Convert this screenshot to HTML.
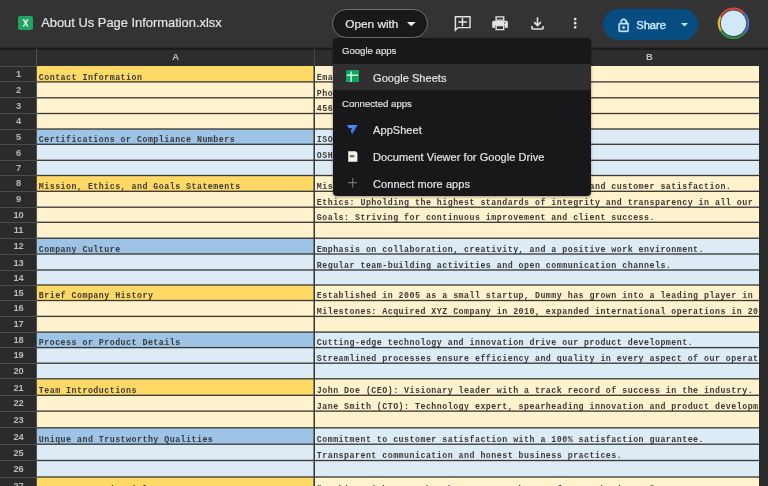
<!DOCTYPE html>
<html><head><meta charset="utf-8">
<style>
html,body{margin:0;padding:0;width:768px;height:486px;overflow:hidden;background:#2b2b2b;font-family:"Liberation Sans",sans-serif;}
svg{position:absolute;display:block;}
#top{position:absolute;left:0;top:0;width:768px;height:48px;background:#333333;}
#topline{position:absolute;left:0;top:48px;width:768px;height:2px;background:#1c1c1c;}
#topline2{position:absolute;left:0;top:47px;width:768px;height:1px;background:#282828;}
.rn{position:absolute;padding-top:0.9px;left:0.6px;width:36px;text-align:center;color:#b9b9b9;font-size:9.3px;font-weight:bold;}
.rnb{position:absolute;left:0;width:36px;height:1px;background:#4d4d4d;}
.rb{position:absolute;left:36.5px;width:722px;background:#3c3c36;}
.c{position:absolute;overflow:hidden;}
.c span{position:absolute;left:2.3px;font-family:"Liberation Mono",monospace;font-size:8.3px;letter-spacing:0.475px;font-weight:bold;color:#3a3a3a;white-space:nowrap;line-height:11px;}
.ca{left:36.5px;width:277px;}
.cb{left:314.5px;width:444px;}
#colhdr{position:absolute;left:0;top:49px;width:768px;height:17.2px;background:#2d2d2d;}
.ch{position:absolute;top:47.9px;height:17px;line-height:17px;text-align:center;color:#bdbdbd;font-size:9.4px;font-weight:bold;}
#menu{position:absolute;left:332.8px;top:38px;width:258px;height:157.5px;background:#18181a;border-radius:4px;box-shadow:0 1px 3px rgba(0,0,0,.4);}
.ml{position:absolute;color:#e3e3e3;font-size:11px;white-space:nowrap;letter-spacing:0.05px;-webkit-text-stroke:0.2px #e3e3e3;}
.mh{position:absolute;color:#e3e3e3;font-size:9.6px;white-space:nowrap;-webkit-text-stroke:0.15px #e3e3e3;}
</style></head><body><div id="root" style="position:absolute;left:0;top:0;width:768px;height:486px;will-change:transform;">
<div id="top">
  <svg style="left:18px;top:16px" width="15" height="14" viewBox="0 0 15 14"><rect x="0" y="0" width="15" height="14" rx="2" fill="#1fa463"/><path d="M4.6 3.3h1.7l1.3 2.2 1.3-2.2h1.6L8.5 6.9l2.1 3.6H8.9L7.6 8.2 6.2 10.5H4.6l2.2-3.6z" fill="#e8f5ec"/></svg>
  <div style="position:absolute;left:41.2px;top:15.2px;color:#e3e3e3;font-size:12.9px;white-space:nowrap;-webkit-text-stroke:0.2px #e3e3e3;">About Us Page Information.xlsx</div>
  <div style="position:absolute;left:332px;top:8.5px;width:96px;height:29.2px;box-sizing:border-box;border:1px solid #707070;border-radius:15px;background:#19191b;"></div>
  <div style="position:absolute;left:345.3px;top:17.3px;color:#ececec;font-size:11.8px;white-space:nowrap;letter-spacing:0px;-webkit-text-stroke:0.2px #ececec;">Open with</div>
  <svg style="left:407px;top:21.8px" width="9" height="5"><path d="M0 0h8.6L4.3 4.2z" fill="#eee"/></svg>
  <!-- add comment -->
  <svg style="left:448px;top:10px" width="30" height="26" viewBox="0 0 30 26"><path d="M7.4 6.7H22V17.6H9.9L7.4 20.2Z" fill="none" stroke="#e3e3e3" stroke-width="1.45"/><path d="M10.3 11.3H19V12.8H10.3zM13.7 7.9H15.2V16.2H13.7z" fill="#e3e3e3"/></svg>
  <!-- print -->
  <svg style="left:486px;top:10px" width="30" height="26" viewBox="0 0 30 26"><path fill="#e3e3e3" fill-rule="evenodd" d="M9.4 6.2h9v4.6h-9zM10.8 7.6v1.9h6.2V7.6z"/><path fill="#e3e3e3" d="M6.2 12.3q0-1.6 1.6-1.6h12.5q1.6 0 1.6 1.6V17.7H6.2z"/><path fill="#333" d="M9 15h9.8v5.6H9z"/><path fill="#e3e3e3" fill-rule="evenodd" d="M9.4 14.9h9v5.4h-9zM10.8 16.3v2.6h6.2v-2.6z"/><circle cx="18.9" cy="12.9" r="0.75" fill="#444"/></svg>
  <!-- download -->
  <svg style="left:528px;top:13.75px" width="19" height="19" viewBox="0 -960 960 960"><path fill="#e3e3e3" d="M480-320 280-520l56-58 104 104v-326h80v326l104-104 56 58-200 200ZM240-160q-33 0-56.5-23.5T160-240v-120h80v120h480v-120h80v120q0 33-23.5 56.5T720-160H240Z"/></svg>
  <!-- more -->
  <svg style="left:566.6px;top:15.2px" width="16.4" height="16.4" viewBox="0 0 24 24"><path fill="#e3e3e3" d="M12 8c1.1 0 2-.9 2-2s-.9-2-2-2-2 .9-2 2 .9 2 2 2zm0 2c-1.1 0-2 .9-2 2s.9 2 2 2 2-.9 2-2-.9-2-2-2zm0 6c-1.1 0-2 .9-2 2s.9 2 2 2 2-.9 2-2-.9-2-2-2z"/></svg>
  <!-- share -->
  <div style="position:absolute;left:603px;top:8.6px;width:95.2px;height:31.5px;border-radius:16px;background:#084d82;"></div>
  <div style="position:absolute;left:672.3px;top:8.6px;width:1px;height:31.5px;background:#0b4a7c;"></div>
  <svg style="left:615.5px;top:17.6px" width="15.2" height="15.2" viewBox="0 -960 960 960"><path fill="#c2e7ff" stroke="#c2e7ff" stroke-width="25" d="M240-80q-33 0-56.5-23.5T160-160v-400q0-33 23.5-56.5T240-640h40v-80q0-83 58.5-141.5T480-920q83 0 141.5 58.5T720-720v80h40q33 0 56.5 23.5T800-560v400q0 33-23.5 56.5T720-80H240Zm0-80h480v-400H240v400Zm240-120q33 0 56.5-23.5T560-360q0-33-23.5-56.5T480-440q-33 0-56.5 23.5T400-360q0 33 23.5 56.5T480-280ZM360-640h240v-80q0-50-35-85t-85-35q-50 0-85 35t-35 85v80Z"/></svg>
  <div style="position:absolute;left:636.2px;top:19.1px;color:#c2e7ff;font-size:11.2px;white-space:nowrap;-webkit-text-stroke:0.45px #c2e7ff;">Share</div>
  <svg style="left:681.2px;top:23px" width="8" height="4"><path d="M0 0h7L3.5 3.4z" fill="#c2e7ff"/></svg>
  <!-- avatar -->
  <svg style="left:716px;top:6px" width="36" height="36" viewBox="0 0 36 36">
    <g fill="none" stroke-width="2.3">
      <path d="M4.49 10.67A14.6 14.6 0 0 1 27.82 6.98" stroke="#d04a3c"/>
      <path d="M27.82 6.98A14.6 14.6 0 0 1 28.18 27.26" stroke="#4b72c6"/>
      <path d="M28.18 27.26A14.6 14.6 0 0 1 4.86 24.60" stroke="#2f8f4a"/>
      <path d="M4.86 24.60A14.6 14.6 0 0 1 4.49 10.67" stroke="#e3b42e"/>
    </g>
    <circle cx="17.5" cy="17.3" r="12.7" fill="#d0e8f8"/>
  </svg>
</div>
<div id="colhdr"></div>
<div id="topline"></div><div id="topline2"></div>
<div class="ch" style="left:37.2px;width:277px">A</div>
<div class="ch" style="left:549.4px;width:200px">B</div>
<div style="position:absolute;left:0;top:65.6px;width:36.5px;height:1px;background:#4d4d4d"></div>
<div class="rn" style="top:66.30px;height:15.60px;line-height:15.60px">1</div>
<div class="rnb" style="top:81.40px"></div>
<div class="c ca" style="top:66.30px;height:15.60px;background:#ffd966"><span style="top:5.49px">Contact Information</span></div>
<div class="c cb" style="top:66.30px;height:15.60px;background:#fff2cc"><span style="top:5.49px">Email: info@dummy.com</span></div>
<div class="rn" style="top:81.90px;height:15.90px;line-height:15.90px">2</div>
<div class="rnb" style="top:97.30px"></div>
<div class="c ca" style="top:81.90px;height:15.90px;background:#fff2cc"></div>
<div class="c cb" style="top:81.90px;height:15.90px;background:#fff2cc"><span style="top:5.79px">Phone: (123) 456-7890</span></div>
<div class="rn" style="top:97.80px;height:15.70px;line-height:15.70px">3</div>
<div class="rnb" style="top:113.00px"></div>
<div class="c ca" style="top:97.80px;height:15.70px;background:#fff2cc"></div>
<div class="c cb" style="top:97.80px;height:15.70px;background:#fff2cc"><span style="top:5.59px">456 Business Ave, Suite 100</span></div>
<div class="rn" style="top:113.50px;height:15.50px;line-height:15.50px">4</div>
<div class="rnb" style="top:128.50px"></div>
<div class="c ca" style="top:113.50px;height:15.50px;background:#fff2cc"></div>
<div class="c cb" style="top:113.50px;height:15.50px;background:#fff2cc"></div>
<div class="rn" style="top:129.00px;height:15.30px;line-height:15.30px">5</div>
<div class="rnb" style="top:143.80px"></div>
<div class="c ca" style="top:129.00px;height:15.30px;background:#9dc3e6"><span style="top:5.19px">Certifications or Compliance Numbers</span></div>
<div class="c cb" style="top:129.00px;height:15.30px;background:#ddebf7"><span style="top:5.19px">ISO 9001:2015 Certified</span></div>
<div class="rn" style="top:144.30px;height:16.00px;line-height:16.00px">6</div>
<div class="rnb" style="top:159.80px"></div>
<div class="c ca" style="top:144.30px;height:16.00px;background:#ddebf7"></div>
<div class="c cb" style="top:144.30px;height:16.00px;background:#ddebf7"><span style="top:5.89px">OSHA Compliance No. 12345</span></div>
<div class="rn" style="top:160.30px;height:15.20px;line-height:15.20px">7</div>
<div class="rnb" style="top:175.00px"></div>
<div class="c ca" style="top:160.30px;height:15.20px;background:#ddebf7"></div>
<div class="c cb" style="top:160.30px;height:15.20px;background:#ddebf7"></div>
<div class="rn" style="top:175.50px;height:15.80px;line-height:15.80px">8</div>
<div class="rnb" style="top:190.80px"></div>
<div class="c ca" style="top:175.50px;height:15.80px;background:#ffd966"><span style="top:5.69px">Mission, Ethics, and Goals Statements</span></div>
<div class="c cb" style="top:175.50px;height:15.80px;background:#fff2cc"><span style="top:5.69px">Mission: To deliver exceptional solutions, growth and customer satisfaction.</span></div>
<div class="rn" style="top:191.30px;height:15.90px;line-height:15.90px">9</div>
<div class="rnb" style="top:206.70px"></div>
<div class="c ca" style="top:191.30px;height:15.90px;background:#fff2cc"></div>
<div class="c cb" style="top:191.30px;height:15.90px;background:#fff2cc"><span style="top:5.79px">Ethics: Upholding the highest standards of integrity and transparency in all our dealings.</span></div>
<div class="rn" style="top:207.20px;height:15.10px;line-height:15.10px">10</div>
<div class="rnb" style="top:221.80px"></div>
<div class="c ca" style="top:207.20px;height:15.10px;background:#fff2cc"></div>
<div class="c cb" style="top:207.20px;height:15.10px;background:#fff2cc"><span style="top:4.99px">Goals: Striving for continuous improvement and client success.</span></div>
<div class="rn" style="top:222.30px;height:15.90px;line-height:15.90px">11</div>
<div class="rnb" style="top:237.70px"></div>
<div class="c ca" style="top:222.30px;height:15.90px;background:#fff2cc"></div>
<div class="c cb" style="top:222.30px;height:15.90px;background:#fff2cc"></div>
<div class="rn" style="top:238.20px;height:15.80px;line-height:15.80px">12</div>
<div class="rnb" style="top:253.50px"></div>
<div class="c ca" style="top:238.20px;height:15.80px;background:#9dc3e6"><span style="top:5.69px">Company Culture</span></div>
<div class="c cb" style="top:238.20px;height:15.80px;background:#ddebf7"><span style="top:5.69px">Emphasis on collaboration, creativity, and a positive work environment.</span></div>
<div class="rn" style="top:254.00px;height:16.00px;line-height:16.00px">13</div>
<div class="rnb" style="top:269.50px"></div>
<div class="c ca" style="top:254.00px;height:16.00px;background:#ddebf7"></div>
<div class="c cb" style="top:254.00px;height:16.00px;background:#ddebf7"><span style="top:5.89px">Regular team-building activities and open communication channels.</span></div>
<div class="rn" style="top:270.00px;height:15.00px;line-height:15.00px">14</div>
<div class="rnb" style="top:284.50px"></div>
<div class="c ca" style="top:270.00px;height:15.00px;background:#ddebf7"></div>
<div class="c cb" style="top:270.00px;height:15.00px;background:#ddebf7"></div>
<div class="rn" style="top:285.00px;height:15.50px;line-height:15.50px">15</div>
<div class="rnb" style="top:300.00px"></div>
<div class="c ca" style="top:285.00px;height:15.50px;background:#ffd966"><span style="top:5.39px">Brief Company History</span></div>
<div class="c cb" style="top:285.00px;height:15.50px;background:#fff2cc"><span style="top:5.39px">Established in 2005 as a small startup, Dummy has grown into a leading player in the industry.</span></div>
<div class="rn" style="top:300.50px;height:15.90px;line-height:15.90px">16</div>
<div class="rnb" style="top:315.90px"></div>
<div class="c ca" style="top:300.50px;height:15.90px;background:#fff2cc"></div>
<div class="c cb" style="top:300.50px;height:15.90px;background:#fff2cc"><span style="top:5.79px">Milestones: Acquired XYZ Company in 2010, expanded international operations in 2015.</span></div>
<div class="rn" style="top:316.40px;height:15.70px;line-height:15.70px">17</div>
<div class="rnb" style="top:331.60px"></div>
<div class="c ca" style="top:316.40px;height:15.70px;background:#fff2cc"></div>
<div class="c cb" style="top:316.40px;height:15.70px;background:#fff2cc"></div>
<div class="rn" style="top:332.10px;height:15.50px;line-height:15.50px">18</div>
<div class="rnb" style="top:347.10px"></div>
<div class="c ca" style="top:332.10px;height:15.50px;background:#9dc3e6"><span style="top:5.39px">Process or Product Details</span></div>
<div class="c cb" style="top:332.10px;height:15.50px;background:#ddebf7"><span style="top:5.39px">Cutting-edge technology and innovation drive our product development.</span></div>
<div class="rn" style="top:347.60px;height:15.60px;line-height:15.60px">19</div>
<div class="rnb" style="top:362.70px"></div>
<div class="c ca" style="top:347.60px;height:15.60px;background:#ddebf7"></div>
<div class="c cb" style="top:347.60px;height:15.60px;background:#ddebf7"><span style="top:5.49px">Streamlined processes ensure efficiency and quality in every aspect of our operations.</span></div>
<div class="rn" style="top:363.20px;height:15.60px;line-height:15.60px">20</div>
<div class="rnb" style="top:378.30px"></div>
<div class="c ca" style="top:363.20px;height:15.60px;background:#ddebf7"></div>
<div class="c cb" style="top:363.20px;height:15.60px;background:#ddebf7"></div>
<div class="rn" style="top:378.80px;height:16.50px;line-height:16.50px">21</div>
<div class="rnb" style="top:394.80px"></div>
<div class="c ca" style="top:378.80px;height:16.50px;background:#ffd966"><span style="top:6.39px">Team Introductions</span></div>
<div class="c cb" style="top:378.80px;height:16.50px;background:#fff2cc"><span style="top:6.39px">John Doe (CEO): Visionary leader with a track record of success in the industry.</span></div>
<div class="rn" style="top:395.30px;height:15.80px;line-height:15.80px">22</div>
<div class="rnb" style="top:410.60px"></div>
<div class="c ca" style="top:395.30px;height:15.80px;background:#fff2cc"></div>
<div class="c cb" style="top:395.30px;height:15.80px;background:#fff2cc"><span style="top:5.69px">Jane Smith (CTO): Technology expert, spearheading innovation and product development.</span></div>
<div class="rn" style="top:411.10px;height:16.70px;line-height:16.70px">23</div>
<div class="rnb" style="top:427.30px"></div>
<div class="c ca" style="top:411.10px;height:16.70px;background:#fff2cc"></div>
<div class="c cb" style="top:411.10px;height:16.70px;background:#fff2cc"></div>
<div class="rn" style="top:427.80px;height:16.40px;line-height:16.40px">24</div>
<div class="rnb" style="top:443.70px"></div>
<div class="c ca" style="top:427.80px;height:16.40px;background:#9dc3e6"><span style="top:6.29px">Unique and Trustworthy Qualities</span></div>
<div class="c cb" style="top:427.80px;height:16.40px;background:#ddebf7"><span style="top:6.29px">Commitment to customer satisfaction with a 100% satisfaction guarantee.</span></div>
<div class="rn" style="top:444.20px;height:16.30px;line-height:16.30px">25</div>
<div class="rnb" style="top:460.00px"></div>
<div class="c ca" style="top:444.20px;height:16.30px;background:#ddebf7"></div>
<div class="c cb" style="top:444.20px;height:16.30px;background:#ddebf7"><span style="top:6.19px">Transparent communication and honest business practices.</span></div>
<div class="rn" style="top:460.50px;height:16.50px;line-height:16.50px">26</div>
<div class="rnb" style="top:476.50px"></div>
<div class="c ca" style="top:460.50px;height:16.50px;background:#ddebf7"></div>
<div class="c cb" style="top:460.50px;height:16.50px;background:#ddebf7"></div>
<div class="rn" style="top:477.00px;height:17.60px;line-height:17.60px">27</div>
<div class="rnb" style="top:494.10px"></div>
<div class="c ca" style="top:477.00px;height:17.60px;background:#ffd966"><span style="top:7.49px">Customer Testimonials</span></div>
<div class="c cb" style="top:477.00px;height:17.60px;background:#fff2cc"><span style="top:7.49px">&quot;Working with Dummy has been a game-changer for our business.&quot;</span></div>
<div class="rb" style="top:81px;height:1px;opacity:0.77"></div>
<div class="rb" style="top:82px;height:1px;opacity:0.58"></div>
<div class="rb" style="top:97px;height:1px;opacity:0.88"></div>
<div class="rb" style="top:98px;height:1px;opacity:0.47"></div>
<div class="rb" style="top:112px;height:1px;opacity:0.17"></div>
<div class="rb" style="top:113px;height:1px;opacity:1.00"></div>
<div class="rb" style="top:114px;height:1px;opacity:0.17"></div>
<div class="rb" style="top:128px;height:1px;opacity:0.68"></div>
<div class="rb" style="top:129px;height:1px;opacity:0.68"></div>
<div class="rb" style="top:143px;height:1px;opacity:0.38"></div>
<div class="rb" style="top:144px;height:1px;opacity:0.98"></div>
<div class="rb" style="top:159px;height:1px;opacity:0.38"></div>
<div class="rb" style="top:160px;height:1px;opacity:0.98"></div>
<div class="rb" style="top:174px;height:1px;opacity:0.18"></div>
<div class="rb" style="top:175px;height:1px;opacity:1.00"></div>
<div class="rb" style="top:176px;height:1px;opacity:0.18"></div>
<div class="rb" style="top:190px;height:1px;opacity:0.38"></div>
<div class="rb" style="top:191px;height:1px;opacity:0.98"></div>
<div class="rb" style="top:206px;height:1px;opacity:0.48"></div>
<div class="rb" style="top:207px;height:1px;opacity:0.88"></div>
<div class="rb" style="top:221px;height:1px;opacity:0.38"></div>
<div class="rb" style="top:222px;height:1px;opacity:0.98"></div>
<div class="rb" style="top:237px;height:1px;opacity:0.48"></div>
<div class="rb" style="top:238px;height:1px;opacity:0.88"></div>
<div class="rb" style="top:253px;height:1px;opacity:0.68"></div>
<div class="rb" style="top:254px;height:1px;opacity:0.68"></div>
<div class="rb" style="top:269px;height:1px;opacity:0.68"></div>
<div class="rb" style="top:270px;height:1px;opacity:0.68"></div>
<div class="rb" style="top:284px;height:1px;opacity:0.68"></div>
<div class="rb" style="top:285px;height:1px;opacity:0.68"></div>
<div class="rb" style="top:299px;height:1px;opacity:0.18"></div>
<div class="rb" style="top:300px;height:1px;opacity:1.00"></div>
<div class="rb" style="top:301px;height:1px;opacity:0.18"></div>
<div class="rb" style="top:315px;height:1px;opacity:0.28"></div>
<div class="rb" style="top:316px;height:1px;opacity:1.00"></div>
<div class="rb" style="top:317px;height:1px;opacity:0.07"></div>
<div class="rb" style="top:331px;height:1px;opacity:0.57"></div>
<div class="rb" style="top:332px;height:1px;opacity:0.78"></div>
<div class="rb" style="top:346px;height:1px;opacity:0.07"></div>
<div class="rb" style="top:347px;height:1px;opacity:1.00"></div>
<div class="rb" style="top:348px;height:1px;opacity:0.28"></div>
<div class="rb" style="top:362px;height:1px;opacity:0.48"></div>
<div class="rb" style="top:363px;height:1px;opacity:0.88"></div>
<div class="rb" style="top:378px;height:1px;opacity:0.88"></div>
<div class="rb" style="top:379px;height:1px;opacity:0.48"></div>
<div class="rb" style="top:394px;height:1px;opacity:0.38"></div>
<div class="rb" style="top:395px;height:1px;opacity:0.98"></div>
<div class="rb" style="top:410px;height:1px;opacity:0.57"></div>
<div class="rb" style="top:411px;height:1px;opacity:0.78"></div>
<div class="rb" style="top:427px;height:1px;opacity:0.88"></div>
<div class="rb" style="top:428px;height:1px;opacity:0.48"></div>
<div class="rb" style="top:443px;height:1px;opacity:0.48"></div>
<div class="rb" style="top:444px;height:1px;opacity:0.88"></div>
<div class="rb" style="top:459px;height:1px;opacity:0.18"></div>
<div class="rb" style="top:460px;height:1px;opacity:1.00"></div>
<div class="rb" style="top:461px;height:1px;opacity:0.18"></div>
<div class="rb" style="top:476px;height:1px;opacity:0.68"></div>
<div class="rb" style="top:477px;height:1px;opacity:0.68"></div>
<div class="rb" style="top:493px;height:1px;opacity:0.07"></div>
<div class="rb" style="top:494px;height:1px;opacity:1.00"></div>
<div class="rb" style="top:495px;height:1px;opacity:0.28"></div>
<div style="position:absolute;left:35.8px;top:49px;width:1.2px;height:437px;background:#505050"></div>
<div style="position:absolute;left:313.5px;top:49px;width:1.2px;height:17px;background:#4c4c4c"></div><div style="position:absolute;left:313px;top:66px;width:2px;height:420px;background:#3c3c36;opacity:0.55"></div><div style="position:absolute;left:313.5px;top:66px;width:1px;height:420px;background:#3c3c36"></div>
<div style="position:absolute;left:758.5px;top:50px;width:9.5px;height:436px;background:#2b2b2b"></div>
<div id="menu">
  <div class="mh" style="left:9.2px;top:6.8px">Google apps</div>
  <div style="position:absolute;left:0;top:26px;width:258px;height:26.3px;background:#303031"></div>
  <svg style="left:13.1px;top:31.7px" width="13.2" height="12.8" viewBox="0 0 13.2 12.8"><rect width="13.2" height="12.8" rx="1.3" fill="#11a45e"/><path d="M4.4 1.6h1.5v11.2H4.4zM0.9 4.5h11.2v1.5H0.9z" fill="#d2f7df"/></svg>
  <div class="ml" style="left:40.3px;top:34.1px">Google Sheets</div>
  <div class="mh" style="left:9.2px;top:59.5px">Connected apps</div>
  <svg style="left:9.2px;top:82px" width="20" height="20" viewBox="0 0 20 20"><path d="M5 5H15.6L10.3 14 8.6 10.9 10.3 8.3H6.8Z" fill="#4a8af4"/><path d="M15.6 5 10.3 14 9.5 12.5 13.2 6.3Z" fill="#2f6fe0"/></svg>
  <div class="ml" style="left:40.3px;top:86.3px">AppSheet</div>
  <svg style="left:14.8px;top:112.6px" width="10" height="11" viewBox="0 0 10 11"><path d="M0.2 0.3h7.6l1.6 1.6v8.8H0.2z" fill="#f2f2f2"/><rect x="1.8" y="4.2" width="4.4" height="2" fill="#6b6330"/></svg>
  <div class="ml" style="left:40.3px;top:113.4px">Document Viewer for Google Drive</div>
  <svg style="left:14.9px;top:140.2px" width="9.5" height="9.5" viewBox="0 0 9.5 9.5"><path d="M4.3 0h0.9v9.5H4.3zM0 4.3h9.5v0.9H0z" fill="#8a8a8a"/></svg>
  <div class="ml" style="left:40.3px;top:139.9px">Connect more apps</div>
</div>
</div></body></html>
